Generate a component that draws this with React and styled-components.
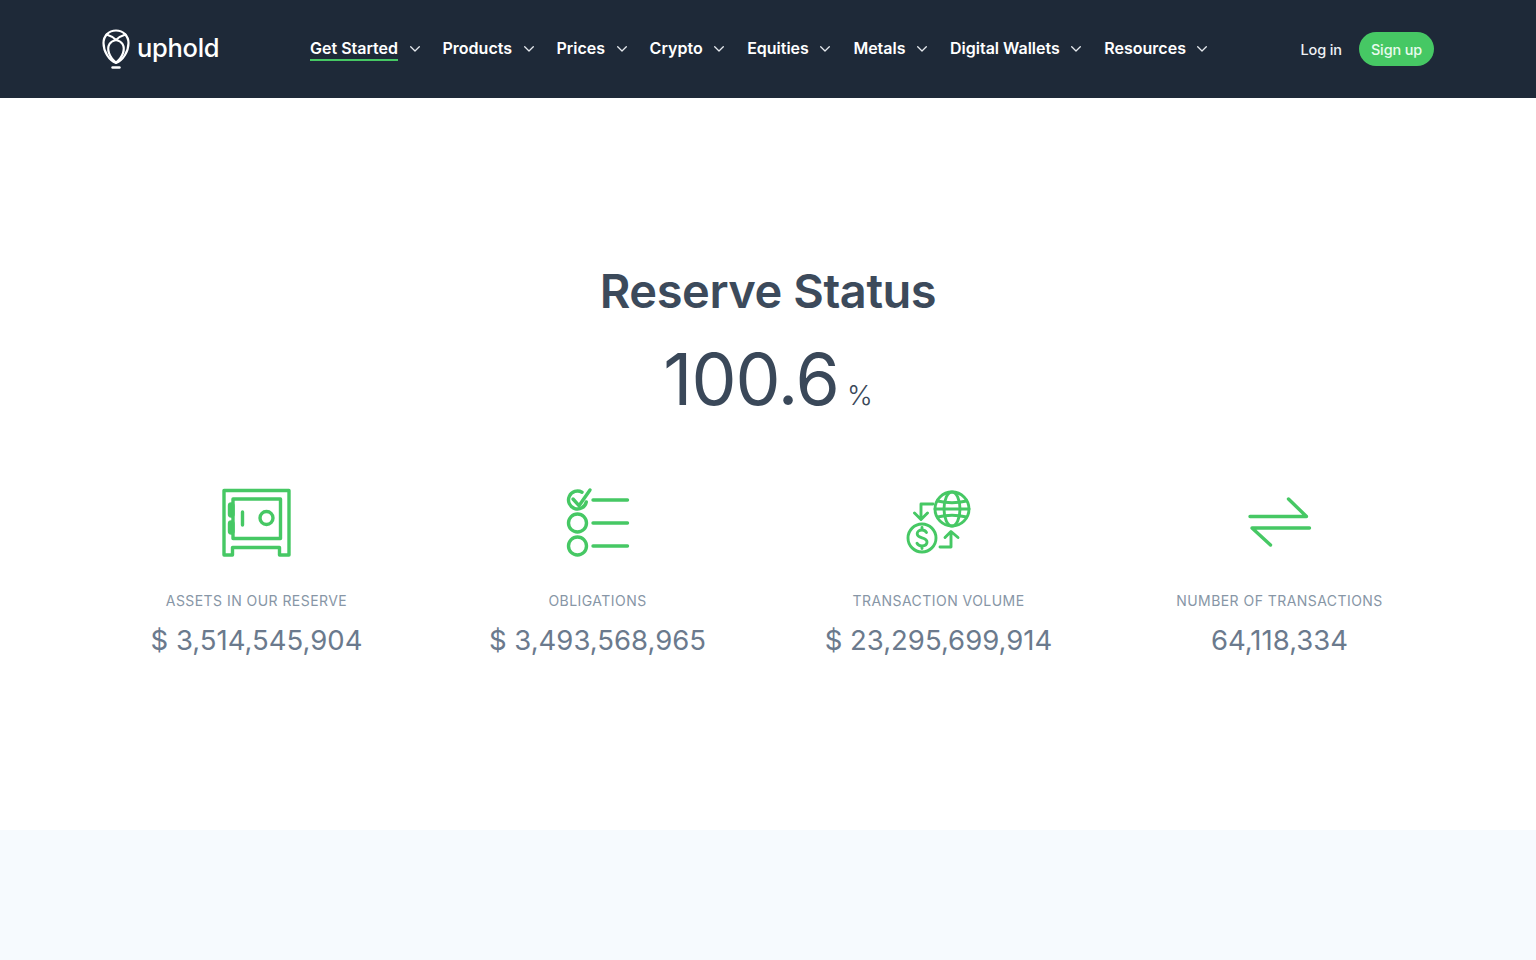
import React from 'react';
import styled, { createGlobalStyle } from 'styled-components';

const GREEN = '#46c864';

const Global = createGlobalStyle`
    html, body { margin: 0; padding: 0; background: #fff; }
    body { font-family: Inter, Lato, sans-serif; overflow: hidden; }
    * { box-sizing: border-box; }
`;

const Header = styled.header`
    height: 98px;
    background: #1e2938;
    display: flex;
    align-items: center;
    padding: 0 102px;
`;

const Brand = styled.a`
    display: flex;
    align-items: center;
    gap: 7px;
    width: 208px;
    color: #fff;
    svg { display: block; }
    span {
        font-size: 25.500px;
        font-weight: 500;
        letter-spacing: -0.3px;
        position: relative;
        top: -2px;
    }
`;

const Nav = styled.nav`
    display: flex;
    align-items: center;
    gap: 23px;
    flex: 1;
`;

const NavItem = styled.a`
    display: flex;
    align-items: center;
    gap: 11.500px;
    color: #fff;
    font-size: 16px;
    font-weight: 600;
`;

const NavLabel = styled.span`
    display: block;
    line-height: 20px;
    padding-bottom: 1px;
    border-bottom: 2px solid ${({ $active }) => ($active ? GREEN : 'transparent')};
`;

const Auth = styled.div`
    display: flex;
    align-items: center;
    gap: 17px;
`;

const Login = styled.a`
    color: #eef1f5;
    font-size: 14.500px;
    font-weight: 500;
    letter-spacing: -0.1px;
`;

const Signup = styled.a`
    width: 75px;
    height: 34px;
    border-radius: 17px;
    background: ${GREEN};
    color: #e9fbee;
    font-size: 14.400px;
    font-weight: 500;
    letter-spacing: -0.1px;
    display: flex;
    align-items: center;
    justify-content: center;
`;

const Reserve = styled.main`
    height: 732px;
    padding: 165px 86px 0;
    display: flex;
    flex-direction: column;
    align-items: center;
    color: #3a4859;
`;

const Title = styled.h1`
    margin: 0;
    font-size: 47px;
    line-height: 56px;
    font-weight: 600;
    letter-spacing: -0.45px;
    color: #3c4a5b;
`;

const Ratio = styled.div`
    margin-top: 25px;
    height: 70px;
    display: flex;
    align-items: baseline;
    gap: 8px;
    font-size: 71.500px;
    line-height: 70px;
    font-weight: 400;
    letter-spacing: -1px;
    small { font-size: 27.500px; line-height: 1; letter-spacing: 0; font-weight: 300; }
`;

const Stats = styled.div`
    width: 100%;
    margin-top: 68px;
    display: grid;
    grid-template-columns: repeat(4, 1fr);
`;

const Stat = styled.div`
    display: flex;
    flex-direction: column;
    align-items: center;
`;

const IconBox = styled.div`
    width: 80px;
    height: 80px;
    margin-left: -2px;
    svg { display: block; }
`;

const StatLabel = styled.div`
    margin-top: 30px;
    font-size: 14px;
    line-height: 18px;
    color: #8796a6;
    letter-spacing: 0.45px;
    text-transform: uppercase;
`;

const StatValue = styled.div`
    margin-top: 10px;
    font-size: 27.500px;
    line-height: 40px;
    color: #6b7a8d;
`;

const Band = styled.section`
    height: 130px;
    background: #f6fafe;
`;

const Logo = () => (
    <svg width="28" height="40" viewBox="0 0 28 40" fill="none" stroke="#fff" strokeWidth="2.200" strokeLinecap="round" strokeLinejoin="round">
        <path d="M14 1.500C6.800 1.500 1.500 7 1.500 14c0 8.500 5.600 17.500 12.500 20 6.900-2.500 12.500-11.500 12.500-20C26.500 7 21.200 1.500 14 1.500Z" />
        <path d="M14 33.500C7 28 4.500 20 7.500 15c1.500-2.500 4-3.500 6.500-4 2.500.5 5 1.500 6.500 4 3 5 .5 13-6.500 18.500Z" />
        <path d="M4.500 5.500C8 6.500 11.500 8.500 14 11c2.500-2.500 6-4.500 9.500-5.500" />
        <path d="M10.500 38.500h7" strokeWidth="2.400" />
    </svg>
);

const Chevron = () => (
    <svg width="10" height="6" viewBox="0 0 10 6" fill="none" stroke="#e6eaef" strokeWidth="1.300" strokeLinecap="round" strokeLinejoin="round">
        <path d="M0.700 0.800 5 5 9.300 0.800" />
    </svg>
);

const SafeIcon = () => (
    <svg width="80" height="80" viewBox="0 0 80 80" fill="none" stroke={GREEN} strokeWidth="3.400" strokeLinejoin="round" strokeLinecap="round">
        <path d="M8 8.500H73V73H63.500V65.500H16.500V73H8Z" />
        <path d="M17 17H64.500V56.500H17Z" />
        <rect x="13.500" y="22" width="3.500" height="12" rx="1.700" fill={GREEN} />
        <rect x="13.500" y="40" width="3.500" height="11" rx="1.700" fill={GREEN} />
        <path d="M26.500 30V43" />
        <circle cx="50.500" cy="36" r="6.500" />
    </svg>
);

const ListIcon = () => (
    <svg width="80" height="80" viewBox="0 0 80 80" fill="none" stroke={GREEN} strokeWidth="3.400" strokeLinecap="round" strokeLinejoin="round">
        <path d="M25 10.200A9 9 0 1 0 29.300 20" />
        <path d="M16 17L22 23.700L33 8" />
        <path d="M36 18H70.500" />
        <circle cx="20.500" cy="41" r="9" />
        <path d="M36 41H70.500" />
        <circle cx="20.500" cy="64" r="9" />
        <path d="M36 64H70.500" />
    </svg>
);

const VolumeIcon = () => (
    <svg width="80" height="80" viewBox="0 0 80 80" fill="none" stroke={GREEN} strokeWidth="2.900" strokeLinecap="round" strokeLinejoin="round">
        <circle cx="54" cy="27" r="17" />
        <ellipse cx="54" cy="27" rx="8" ry="17" />
        <path d="M37 27H71M39.500 19C48 21 60 21 68.500 19M39.500 35C48 33 60 33 68.500 35" />
        <circle cx="24" cy="56" r="14" />
        <path d="M28.500 50.500C27.500 48.800 26 48 24 48c-2.800 0-4.800 1.500-4.800 3.800 0 5.200 9.800 2.800 9.800 8.200 0 2.400-2 3.900-5 3.900-2.200 0-4-.9-5-2.700M24 45.500V48M24 64V66.500" />
        <path d="M35 22H23V37M16.500 31L23 37.500L29.500 31" />
        <path d="M42 65H53V50M47 55.500L53 49.500L60 55.500" />
    </svg>
);

const SwapIcon = () => (
    <svg width="80" height="80" viewBox="0 0 80 80" fill="none" stroke={GREEN} strokeWidth="3.400" strokeLinecap="round" strokeLinejoin="round">
        <path d="M11 34.500H67.500L49.500 17" />
        <path d="M70.500 46H13L31.500 63" />
    </svg>
);

const NAV = ['Get Started', 'Products', 'Prices', 'Crypto', 'Equities', 'Metals', 'Digital Wallets', 'Resources'];

const STATS = [
    { label: 'Assets in our reserve', value: '$ 3,514,545,904', Icon: SafeIcon },
    { label: 'Obligations', value: '$ 3,493,568,965', Icon: ListIcon },
    { label: 'Transaction volume', value: '$ 23,295,699,914', Icon: VolumeIcon },
    { label: 'Number of transactions', value: '64,118,334', Icon: SwapIcon },
];

export default function App() {
    return (
        <>
            <Global />
            <Header>
                <Brand>
                    <Logo />
                    <span>uphold</span>
                </Brand>
                <Nav>
                    {NAV.map((item, i) => (
                        <NavItem key={item}>
                            <NavLabel $active={i === 0}>{item}</NavLabel>
                            <Chevron />
                        </NavItem>
                    ))}
                </Nav>
                <Auth>
                    <Login>Log in</Login>
                    <Signup>Sign up</Signup>
                </Auth>
            </Header>
            <Reserve>
                <Title>Reserve Status</Title>
                <Ratio>100.6<small>%</small></Ratio>
                <Stats>
                    {STATS.map(({ label, value, Icon }) => (
                        <Stat key={label}>
                            <IconBox><Icon /></IconBox>
                            <StatLabel>{label}</StatLabel>
                            <StatValue>{value}</StatValue>
                        </Stat>
                    ))}
                </Stats>
            </Reserve>
            <Band />
        </>
    );
}
